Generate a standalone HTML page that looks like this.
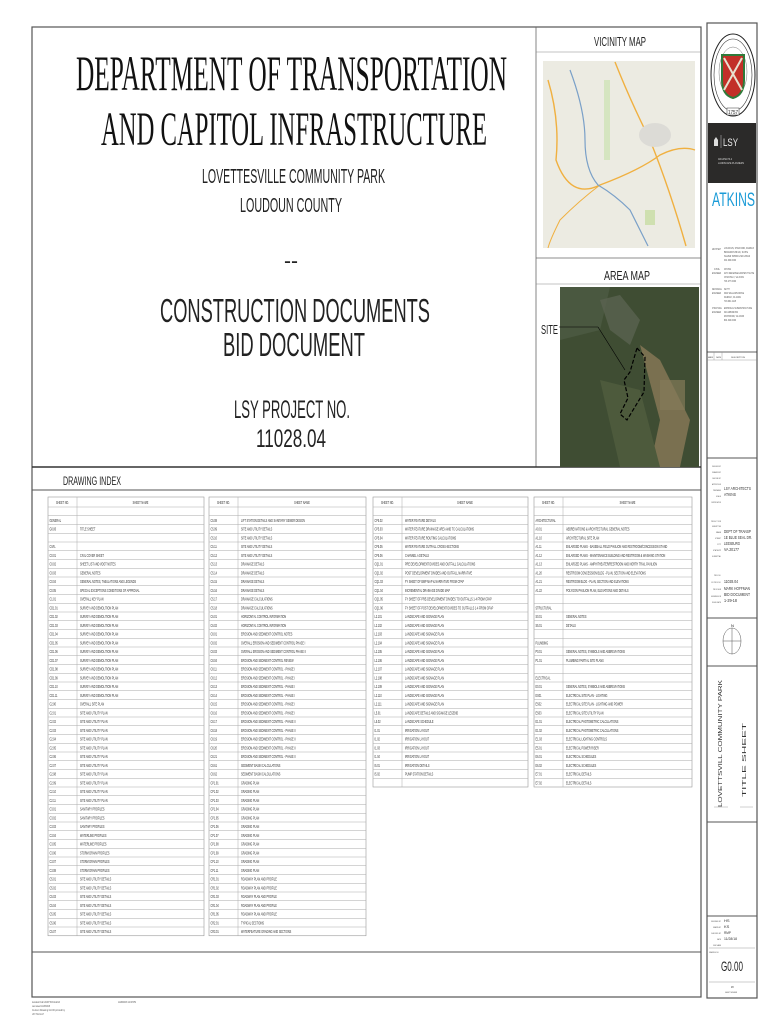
<!DOCTYPE html>
<html><head><meta charset="utf-8"><style>
html,body{margin:0;padding:0;background:#fff;width:770px;height:1024px;overflow:hidden}
svg{display:block;fill:#222}
text{font-family:"Liberation Sans",sans-serif}
.s{font-family:"Liberation Serif",serif}
</style></head><body>
<svg id="sv" width="770" height="1024" viewBox="0 0 770 1024" xmlns="http://www.w3.org/2000/svg">
<rect x="32" y="27" width="669" height="970" fill="none" stroke="#555" stroke-width="1.2"/>
<line x1="536" y1="27" x2="536" y2="467" stroke="#666" stroke-width="0.8"/>
<line x1="536" y1="52" x2="701" y2="52" stroke="#888" stroke-width="0.6"/>
<line x1="536" y1="258" x2="701" y2="258" stroke="#666" stroke-width="0.8"/>
<line x1="536" y1="284" x2="701" y2="284" stroke="#888" stroke-width="0.6"/>
<line x1="32" y1="467" x2="701" y2="467" stroke="#333" stroke-width="1.4"/>
<line x1="32" y1="490" x2="701" y2="490" stroke="#555" stroke-width="1"/>
<line x1="32" y1="952" x2="701" y2="952" stroke="#555" stroke-width="1"/>

<text class="s" x="76" y="90" font-size="50" fill="#111" textLength="431" lengthAdjust="spacingAndGlyphs">DEPARTMENT OF TRANSPORTATION</text>
<text class="s" x="101" y="145" font-size="48" fill="#111" textLength="386" lengthAdjust="spacingAndGlyphs">AND CAPITOL INFRASTRUCTURE</text>
<text x="202" y="183" font-size="20" textLength="183" lengthAdjust="spacingAndGlyphs">LOVETTESVILLE COMMUNITY PARK</text>
<text x="240" y="212" font-size="20" textLength="102" lengthAdjust="spacingAndGlyphs">LOUDOUN COUNTY</text>
<text x="284" y="268" font-size="22" textLength="14" lengthAdjust="spacingAndGlyphs">--</text>
<text x="160" y="322" font-size="33" textLength="270" lengthAdjust="spacingAndGlyphs">CONSTRUCTION DOCUMENTS</text>
<text x="223" y="356" font-size="33" textLength="142" lengthAdjust="spacingAndGlyphs">BID DOCUMENT</text>
<text x="234" y="418" font-size="25" textLength="116" lengthAdjust="spacingAndGlyphs">LSY PROJECT NO.</text>
<text x="256" y="447" font-size="25" textLength="70" lengthAdjust="spacingAndGlyphs">11028.04</text>

<text x="594" y="46" font-size="13" textLength="52" lengthAdjust="spacingAndGlyphs">VICINITY MAP</text>
<rect x="543" y="61" width="152" height="187" fill="#ecebe2"/>
<path d="M548 80 Q560 120 556 160 Q570 200 600 185 Q640 170 660 155 Q680 145 695 150" fill="none" stroke="#f0b040" stroke-width="1.4"/>
<path d="M615 62 Q630 100 650 140 Q670 190 686 246" fill="none" stroke="#f0b040" stroke-width="1.4"/>
<path d="M600 185 Q580 200 560 220 Q550 240 548 248" fill="none" stroke="#f0b040" stroke-width="1"/>
<path d="M570 70 Q585 110 585 140 Q585 170 598 185 Q615 195 630 210 Q640 230 648 246" fill="none" stroke="#7aa0c8" stroke-width="1.2"/>
<rect x="645" y="210" width="10" height="15" fill="#cfe0b0"/>
<rect x="604" y="80" width="6" height="80" fill="#d5e5c0"/>
<ellipse cx="655" cy="135" rx="16" ry="12" fill="#dcdbd6"/>

<text x="604" y="280" font-size="13" textLength="46" lengthAdjust="spacingAndGlyphs">AREA MAP</text>
<rect x="560" y="287" width="139" height="180" fill="#3f4d33"/>
<path d="M560 287 L610 287 L600 330 L560 340 Z" fill="#4a5840"/>
<path d="M640 345 L660 360 L690 420 L680 467 L650 467 L660 420 Z" fill="#7a7050"/>
<path d="M600 380 L640 390 L660 467 L620 467 Z" fill="#4d5a3c"/>
<rect x="660" y="380" width="25" height="30" fill="#857a58" opacity="0.7"/>
<path d="M600 300 L610 330 L630 345 L640 320 L620 295 Z" fill="#5a6350" opacity="0.8"/>
<path d="M637 348 L645 357 L644 392 L627 420 L620 414 L628 398 L624 380 L630 372 Z" fill="none" stroke="#000" stroke-width="1.2" stroke-dasharray="4 2"/>
<text x="541" y="334" font-size="13" textLength="17" lengthAdjust="spacingAndGlyphs">SITE</text>
<line x1="559" y1="327" x2="598" y2="327" stroke="#000" stroke-width="0.6"/>
<line x1="598" y1="327" x2="625" y2="370" stroke="#000" stroke-width="0.6"/>

<text x="63" y="485" font-size="12" textLength="58" lengthAdjust="spacingAndGlyphs">DRAWING INDEX</text>
<g id="tables"></g>

<g fill="#555" font-size="2.6">
<text x="32" y="1003" textLength="28" lengthAdjust="spacingAndGlyphs">Autodesk FILE:\LOVETTESVILLE\G0</text>
<text x="32" y="1007" textLength="18" lengthAdjust="spacingAndGlyphs">Last saved 11/28/2018</text>
<text x="32" y="1011" textLength="33" lengthAdjust="spacingAndGlyphs">Current Drawing G0.00 printed by</text>
<text x="32" y="1015" textLength="12" lengthAdjust="spacingAndGlyphs">LSY Plot 11x17</text>
<text x="118" y="1003" textLength="18" lengthAdjust="spacingAndGlyphs">11/28/2018 12:08 PM</text>
</g>

<rect x="707" y="23" width="50" height="975" fill="none" stroke="#555" stroke-width="1.2"/>
<ellipse cx="733" cy="75" rx="22" ry="41" fill="none" stroke="#222" stroke-width="1"/>
<ellipse cx="733" cy="75" rx="19" ry="36" fill="none" stroke="#333" stroke-width="0.6"/>
<ellipse cx="733" cy="72" rx="14" ry="25" fill="#fff" stroke="#555" stroke-width="0.4"/>
<path d="M722 55 L744 55 L744 80 Q744 95 733 98 Q722 95 722 80 Z" fill="#c23028" stroke="#2f7a3a" stroke-width="2"/>
<path d="M724 58 L742 90 M742 58 L724 90" stroke="#e8e0d0" stroke-width="2"/>
<rect x="727" y="108" width="12" height="7" fill="#fff" stroke="#333" stroke-width="0.5"/>
<text x="728" y="114" font-size="5" textLength="10" lengthAdjust="spacingAndGlyphs">1757</text>
<rect x="708" y="123" width="48" height="60" fill="#2b2a29"/>
<path d="M714 146 L714 140 L716 137 L718 140 L718 146 Z" fill="#ddd"/>
<line x1="721" y1="135" x2="721" y2="148" stroke="#ccc" stroke-width="0.5"/>
<text x="723" y="146" font-size="11" fill="#eee" textLength="15" lengthAdjust="spacingAndGlyphs">LSY</text>
<text x="718" y="160" font-size="2.6" fill="#ddd" textLength="14" lengthAdjust="spacingAndGlyphs">ARCHITECTS &amp;</text>
<text x="718" y="164" font-size="2.6" fill="#ddd" textLength="26" lengthAdjust="spacingAndGlyphs">LANDSCAPE PLANNERS</text>
<text x="712" y="206" font-size="19" fill="#1a9bd7" textLength="43" lengthAdjust="spacingAndGlyphs">ATKINS</text>
<g font-size="2.4" fill="#555">
<text x="712" y="250" textLength="9" lengthAdjust="spacingAndGlyphs">ARCHITECT</text>
<text x="724" y="249" textLength="30" lengthAdjust="spacingAndGlyphs">LOUDOUN, STAFFORD, FAIRFAX</text><text x="724" y="253" textLength="24" lengthAdjust="spacingAndGlyphs">BRANDON BLVD, SUITE</text><text x="724" y="257" textLength="26" lengthAdjust="spacingAndGlyphs">SILVER SPRING MD 20910</text><text x="724" y="261" textLength="12" lengthAdjust="spacingAndGlyphs">301.000.0000</text>
<text x="714" y="270">CIVIL</text><text x="712" y="274" textLength="9" lengthAdjust="spacingAndGlyphs">ENGINEER</text>
<text x="724" y="270" textLength="7" lengthAdjust="spacingAndGlyphs">ATKINS</text><text x="724" y="274" textLength="30" lengthAdjust="spacingAndGlyphs">4270 DEFENSE ENCHEST SUITE</text><text x="724" y="278" textLength="20" lengthAdjust="spacingAndGlyphs">CHANTILLY, VA 20151</text><text x="724" y="282" textLength="12" lengthAdjust="spacingAndGlyphs">703.277.0000</text>
<text x="712" y="290" textLength="10" lengthAdjust="spacingAndGlyphs">MECHANICAL</text><text x="712" y="294" textLength="9" lengthAdjust="spacingAndGlyphs">ENGINEER</text>
<text x="724" y="290" textLength="6" lengthAdjust="spacingAndGlyphs">SETTY</text><text x="724" y="294" textLength="20" lengthAdjust="spacingAndGlyphs">3040 WILLIAMS DRIVE</text><text x="724" y="298" textLength="17" lengthAdjust="spacingAndGlyphs">FAIRFAX, VA 22031</text><text x="724" y="302" textLength="12" lengthAdjust="spacingAndGlyphs">703.691.2115</text>
<text x="712" y="309" textLength="10" lengthAdjust="spacingAndGlyphs">STRUCTURAL</text><text x="712" y="313" textLength="9" lengthAdjust="spacingAndGlyphs">ENGINEER</text>
<text x="724" y="309" textLength="28" lengthAdjust="spacingAndGlyphs">EMPIRICAL SUPERSTRUCTURE</text><text x="724" y="313" textLength="14" lengthAdjust="spacingAndGlyphs">9201 ARBORETUM</text><text x="724" y="317" textLength="20" lengthAdjust="spacingAndGlyphs">RICHMOND, VA 23236</text><text x="724" y="321" textLength="12" lengthAdjust="spacingAndGlyphs">804.320.0000</text>
</g>
<line x1="707" y1="352" x2="757" y2="352" stroke="#333" stroke-width="0.8"/>
<line x1="707" y1="360" x2="757" y2="360" stroke="#888" stroke-width="0.4"/>
<line x1="714" y1="352" x2="714" y2="360" stroke="#888" stroke-width="0.4"/>
<line x1="722" y1="352" x2="722" y2="360" stroke="#888" stroke-width="0.4"/>
<g font-size="2.2" fill="#444"><text x="708" y="358" textLength="5" lengthAdjust="spacingAndGlyphs">MARK</text><text x="716" y="358" textLength="5" lengthAdjust="spacingAndGlyphs">DATE</text><text x="731" y="358" textLength="14" lengthAdjust="spacingAndGlyphs">DESCRIPTION</text></g>
<line x1="707" y1="458" x2="757" y2="458" stroke="#555" stroke-width="0.9"/>
<g font-size="2.2" fill="#555">
<text x="712" y="467" textLength="9" lengthAdjust="spacingAndGlyphs">DESIGN BY</text><text x="712" y="473" textLength="9" lengthAdjust="spacingAndGlyphs">DRAWN BY</text><text x="712" y="479" textLength="9" lengthAdjust="spacingAndGlyphs">CHECKED BY</text><text x="712" y="485" textLength="9" lengthAdjust="spacingAndGlyphs">APPROVED</text><text x="713" y="491" textLength="8" lengthAdjust="spacingAndGlyphs">PREPARED</text><text x="716" y="497" textLength="5" lengthAdjust="spacingAndGlyphs">SCALE</text><text x="711" y="503" textLength="10" lengthAdjust="spacingAndGlyphs">CERTIFICATION</text>
<text x="711" y="522" textLength="10" lengthAdjust="spacingAndGlyphs">PROJECT FOR</text><text x="712" y="527" textLength="9" lengthAdjust="spacingAndGlyphs">SUBMITTED</text><text x="716" y="533" textLength="5" lengthAdjust="spacingAndGlyphs">NAME</text><text x="715" y="539" textLength="6" lengthAdjust="spacingAndGlyphs">STREET</text><text x="717" y="545" textLength="4" lengthAdjust="spacingAndGlyphs">CITY</text><text x="713" y="551" textLength="8" lengthAdjust="spacingAndGlyphs">STATE/ZIP</text><text x="712" y="557" textLength="9" lengthAdjust="spacingAndGlyphs">SUBMITTAL</text>
<text x="714" y="576" textLength="7" lengthAdjust="spacingAndGlyphs">PROJ NO.</text><text x="711" y="583" textLength="10" lengthAdjust="spacingAndGlyphs">LSY PROJ NO.</text><text x="713" y="590" textLength="8" lengthAdjust="spacingAndGlyphs">PROJ MGR</text><text x="711" y="597" textLength="10" lengthAdjust="spacingAndGlyphs">SUBMISSION</text><text x="712" y="603" textLength="9" lengthAdjust="spacingAndGlyphs">ISSUE DATE</text>
</g>
<g font-size="4.2" fill="#333">
<text x="724" y="490" textLength="27" lengthAdjust="spacingAndGlyphs">LSY ARCHITECTS</text><text x="724" y="496" textLength="12" lengthAdjust="spacingAndGlyphs">ATKINS</text>
<text x="724" y="533" textLength="27" lengthAdjust="spacingAndGlyphs">DEPT OF TRANSP</text><text x="724" y="539" textLength="28" lengthAdjust="spacingAndGlyphs">1E BLUE SEAL DR.</text><text x="724" y="545" textLength="16" lengthAdjust="spacingAndGlyphs">LEESBURG</text><text x="724" y="551" textLength="15" lengthAdjust="spacingAndGlyphs">VA 20177</text>
<text x="724" y="583" textLength="14" lengthAdjust="spacingAndGlyphs">11028.04</text><text x="724" y="590" textLength="26" lengthAdjust="spacingAndGlyphs">MARK HOFFMAN</text><text x="724" y="596" textLength="26" lengthAdjust="spacingAndGlyphs">BID DOCUMENT</text><text x="724" y="602" textLength="13" lengthAdjust="spacingAndGlyphs">1-29-18</text>
</g>
<line x1="707" y1="618" x2="757" y2="618" stroke="#555" stroke-width="0.9"/>
<text x="731" y="627" font-size="4">N</text>
<ellipse cx="732" cy="641" rx="9" ry="13" fill="none" stroke="#555" stroke-width="0.5"/>
<line x1="732" y1="628" x2="732" y2="654" stroke="#555" stroke-width="0.5"/>
<line x1="723" y1="641" x2="741" y2="641" stroke="#555" stroke-width="0.5"/>
<line x1="707" y1="666" x2="757" y2="666" stroke="#555" stroke-width="0.9"/>
<text x="722" y="807" font-size="5.2" fill="#333" transform="rotate(-90 722 807)" textLength="127" lengthAdjust="spacingAndGlyphs">LOVETTSVILL COMMUNITY PARK</text>
<text x="746" y="797" font-size="5.2" fill="#333" transform="rotate(-90 746 797)" textLength="74" lengthAdjust="spacingAndGlyphs">TITLE  SHEET</text>
<line x1="714" y1="807" x2="728" y2="807" stroke="#888" stroke-width="0.4"/>
<line x1="740" y1="807" x2="753" y2="807" stroke="#888" stroke-width="0.4"/>
<line x1="707" y1="822" x2="757" y2="822" stroke="#555" stroke-width="0.9"/>
<line x1="707" y1="916" x2="757" y2="916" stroke="#555" stroke-width="0.9"/>
<g font-size="2.2" fill="#555"><text x="711" y="922" textLength="10" lengthAdjust="spacingAndGlyphs">DESIGNED BY</text><text x="713" y="928" textLength="8" lengthAdjust="spacingAndGlyphs">DRAWN BY</text><text x="711" y="934" textLength="10" lengthAdjust="spacingAndGlyphs">CHECKED BY</text><text x="717" y="940" textLength="4" lengthAdjust="spacingAndGlyphs">DATE</text><text x="713" y="946" textLength="8" lengthAdjust="spacingAndGlyphs">FILE NAME</text></g>
<g font-size="4" fill="#333"><text x="724" y="922">HS</text><text x="724" y="928">KS</text><text x="724" y="934" textLength="7" lengthAdjust="spacingAndGlyphs">RMP</text><text x="724" y="940" textLength="13" lengthAdjust="spacingAndGlyphs">11/28/18</text></g>
<line x1="709" y1="948" x2="755" y2="948" stroke="#999" stroke-width="0.5"/>
<text x="709" y="953" font-size="2.2" fill="#555" textLength="10" lengthAdjust="spacingAndGlyphs">DRAWING NO.</text>
<text x="721" y="971" font-size="14" textLength="22" lengthAdjust="spacingAndGlyphs">G0.00</text>
<line x1="709" y1="982" x2="755" y2="982" stroke="#999" stroke-width="0.5"/>
<text x="731" y="988" font-size="2.4" fill="#444">##</text>
<text x="725" y="993" font-size="2.2" fill="#555" textLength="12" lengthAdjust="spacingAndGlyphs">SHEET NUMBER</text>
</svg>
<script>
var NS="http://www.w3.org/2000/svg",g=document.getElementById("tables");
function el(n,a,t){var e=document.createElementNS(NS,n);for(var k in a)e.setAttribute(k,a[k]);if(t)e.textContent=t;g.appendChild(e);return e;}
var R=8.75,TOP=497,HDR=507,SX=0.55;
function tx(x,y,s,anchor){var a={x:0,y:0,"font-size":4.4,fill:"#333",transform:"translate("+x+","+y+") scale("+SX+",1)"};if(anchor)a["text-anchor"]=anchor;el("text",a,s);}
function table(x,w,d,rows){
 var n=rows.length,bot=HDR+n*R;
 el("rect",{x:x,y:TOP,width:w,height:bot-TOP,fill:"none",stroke:"#999","stroke-width":0.6});
 el("line",{x1:x+d,y1:TOP,x2:x+d,y2:bot,stroke:"#aaa","stroke-width":0.5});
 tx(x+d/2,TOP+7,"SHEET NO.","middle");
 tx(x+d+(w-d)/2,TOP+7,"SHEET NAME","middle");
 for(var i=0;i<n;i++){var y=HDR+i*R;el("line",{x1:x,y1:y,x2:x+w,y2:y,stroke:"#aaa","stroke-width":0.5});}
 for(var i=0;i<rows.length;i++){var y=HDR+i*R+6,r=rows[i];
  if(r[0])tx(x+1.5,y,r[0]);
  if(r[1])tx(x+d+3,y,r[1]);}
}
function seq(p,a,b,name){var o=[];for(var i=a;i<=b;i++)o.push([p+(i<10?"0":"")+i,name]);return o;}
var t1=[["",""],["GENERAL",""],["G0.00","TITLE SHEET"],["",""],["CIVIL",""],["C0.01","CIVIL COVER SHEET"],["C0.02","SHEET LIST AND VDOT NOTES"],["C0.03","GENERAL NOTES"],["C0.04","GENERAL NOTES, TABULATIONS AND LEGENDS"],["C0.05","SPECIAL EXCEPTIONS CONDITIONS OF APPROVAL"],["C1.01","OVERALL KEY PLAN"]]
.concat(seq("CD1.",1,11,"SURVEY AND DEMOLITION PLAN"),[["C2.00","OVERALL SITE PLAN"]],seq("C2.",1,11,"SITE AND UTILITY PLAN"),[["C3.01","SANITARY PROFILES"],["C3.02","SANITARY PROFILES"],["C3.03","SANITARY PROFILES"],["C3.04","WATERLINE PROFILES"],["C3.05","WATERLINE PROFILES"],["C3.06","STORM DRAIN PROFILES"],["C3.07","STORM DRAIN PROFILES"],["C3.08","STORM DRAIN PROFILES"]],seq("C5.",1,7,"SITE AND UTILITY DETAILS"));
var t2=[["",""],["C5.08","LIFT STATION DETAILS AND SANITARY SEWER DESIGN"]].concat(seq("C5.",9,12,"SITE AND UTILITY DETAILS"),seq("C5.",13,16,"DRAINAGE DETAILS"),seq("C5.",17,18,"DRAINAGE CALCULATIONS"),seq("C6.",1,2,"HORIZONTAL CONTROL INFORMATION"),[["C8.01","EROSION AND SEDIMENT CONTROL NOTES"],["C8.02","OVERALL EROSION AND SEDIMENT CONTROL PHASE I"],["C8.03","OVERALL EROSION AND SEDIMENT CONTROL PHASE II"],["C8.04","EROSION AND SEDIMENT CONTROL REVIEW"]],seq("C8.",11,16,"EROSION AND SEDIMENT CONTROL - PHASE I"),seq("C8.",17,21,"EROSION AND SEDIMENT CONTROL - PHASE II"),seq("C8.",61,62,"SEDIMENT BASIN CALCULATIONS"),seq("CP1.",1,11,"GRADING PLAN"),seq("CR1.",1,5,"ROADWAY PLAN AND PROFILE"),[["CR2.01","TYPICAL SECTIONS"],["CR3.01","WATERFEATURE GRADING AND SECTIONS"]]);
var t3=[["",""],["CP5.02","WATER FEATURE DETAILS"],["CP5.03","WATER FEATURE DRAINAGE AREA AND TC CALCULATIONS"],["CP5.04","WATER FEATURE ROUTING CALCULATIONS"],["CP5.05","WATER FEATURE OUTFALL CROSS-SECTIONS"],["CP5.06","CHANNEL A DETAILS"],["CQ1.01","PRE DEVELOPMENT DIVIDES AND OUTFALL CALCULATIONS"],["CQ1.02","POST DEVELOPMENT DIVIDES AND OUTFALL NARRATIVE"],["CQ1.03","FY SHEET OF BMP MAP & NARRATIVE FROM CPAP"],["CQ1.04","INCREMENTAL DRAINAGE DIVIDE MAP"],["CQ1.05","FY SHEET OF PRE-DEVELOPMENT DIVIDES TO OUTFALLS 1-4 FROM CPAP"],["CQ1.06","FY SHEET OF POST DEVELOPMENT DIVIDES TO OUTFALLS 1-4 FROM CPAP"],["L2.101","LANDSCAPE AND SIGNAGE PLAN"],["L2.102","LANDSCAPE AND SIGNAGE PLAN"],["L2.103","LANDSCAPE AND SIGNAGE PLAN"],["L2.104","LANDSCAPE AND SIGNAGE PLAN"],["L2.105","LANDSCAPE AND SIGNAGE PLAN"],["L2.106","LANDSCAPE AND SIGNAGE PLAN"],["L2.107","LANDSCAPE AND SIGNAGE PLAN"],["L2.108","LANDSCAPE AND SIGNAGE PLAN"],["L2.109","LANDSCAPE AND SIGNAGE PLAN"],["L2.110","LANDSCAPE AND SIGNAGE PLAN"],["L2.111","LANDSCAPE AND SIGNAGE PLAN"],["L5.01","LANDSCAPE DETAILS AND SIGNAGE LEGEND"],["L5.02","LANDSCAPE SCHEDULE"],["I1.01","IRRIGATION LAYOUT"],["I1.02","IRRIGATION LAYOUT"],["I1.03","IRRIGATION LAYOUT"],["I1.04","IRRIGATION LAYOUT"],["I5.01","IRRIGATION DETAILS"],["I5.02","PUMP STATION DETAILS"],["",""]];
var t4=[["",""],["ARCHITECTURAL",""],["A0.01","ABBREVIATIONS & ARCHITECTURAL GENERAL NOTES"],["A1.10","ARCHITECTURAL SITE PLAN"],["A1.11","ENLARGED PLANS - BASEBALL FIELD PAVILION AND RESTROOM/CONCESSION STAND"],["A1.12","ENLARGED PLANS - MAINTENANCE BUILDING AND RESTROOM & WASHING STATION"],["A1.13","ENLARGED PLANS - AMPHITHEATER/RESTROOM AND NORTH TRAIL PAVILION"],["A1.20","RESTROOM CONCESSION BLDG - PLAN, SECTION AND ELEVATIONS"],["A1.21","RESTROOM BLDG - PLAN, SECTION AND ELEVATIONS"],["A1.22","POLYGON PAVILION PLAN, ELEVATIONS AND DETAILS"],["",""],["STRUCTURAL",""],["S0.01","GENERAL NOTES"],["S5.01","DETAILS"],["",""],["PLUMBING",""],["P0.01","GENERAL NOTES, SYMBOLS AND ABBREVIATIONS"],["P1.01","PLUMBING PARTIAL SITE PLANS"],["",""],["ELECTRICAL",""],["E0.01","GENERAL NOTES, SYMBOLS AND ABBREVIATIONS"],["ES01","ELECTRICAL SITE PLAN - LIGHTING"],["ES02","ELECTRICAL SITE PLAN - LIGHTING AND POWER"],["ES03","ELECTRICAL SITE UTILITY PLAN"],["E1.01","ELECTRICAL PHOTOMETRIC CALCULATIONS"],["E1.02","ELECTRICAL PHOTOMETRIC CALCULATIONS"],["E1.03","ELECTRICAL LIGHTING CONTROLS"],["E5.01","ELECTRICAL POWER RISER"],["E6.01","ELECTRICAL SCHEDULES"],["E6.02","ELECTRICAL SCHEDULES"],["E7.01","ELECTRICAL DETAILS"],["E7.02","ELECTRICAL DETAILS"]];
table(48,156,29,t1);
table(209,157,29,t2);
table(373,155,29,t3);
table(534,158,29,t4);
</script>
</body></html>
